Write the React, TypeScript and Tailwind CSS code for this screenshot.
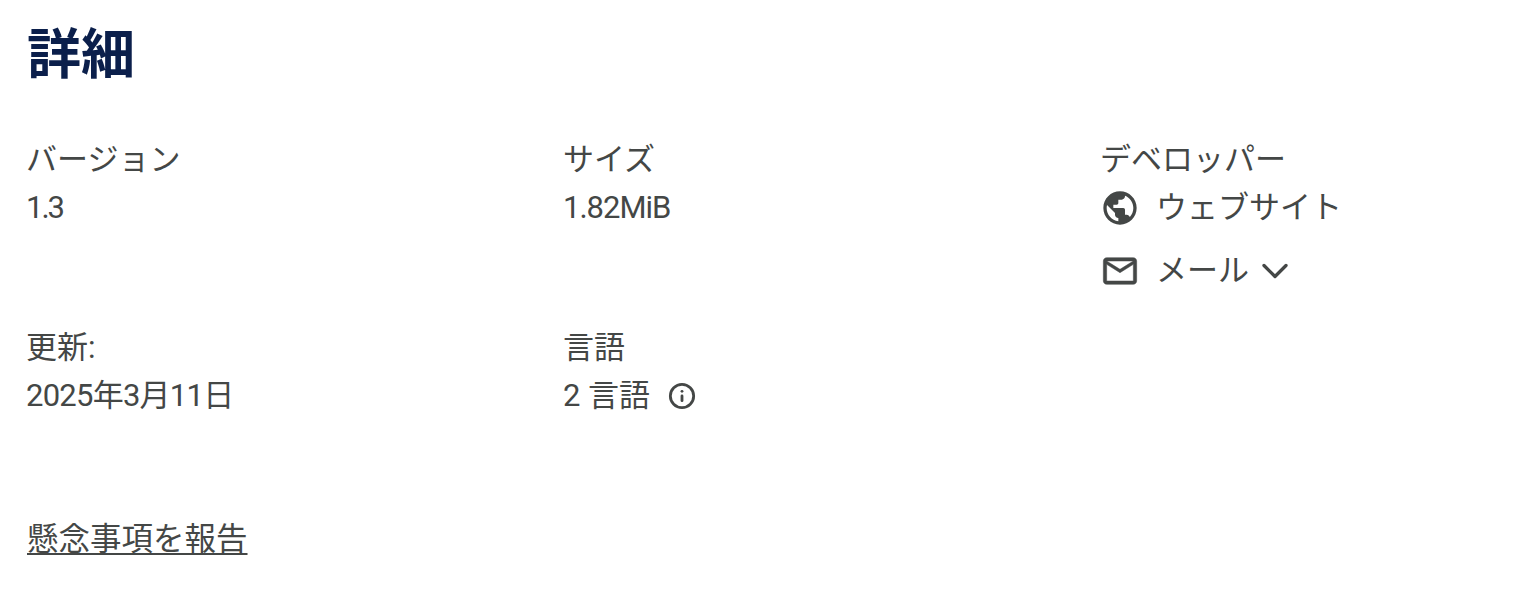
import { ChevronDown, Info } from "lucide-react";

const font = { fontFamily: '"Roboto", "Noto Sans CJK JP", sans-serif' };

function Globe() {
  return (
    <svg viewBox="0 0 24 24" className="h-[40px] w-[40px] shrink-0" fill="#444746">
      <path d="M12 2C6.48 2 2 6.48 2 12s4.48 10 10 10 10-4.48 10-10S17.52 2 12 2zm-1 17.93c-3.95-.49-7-3.85-7-7.93 0-.62.08-1.21.21-1.79L9 15v1c0 1.1.9 2 2 2v1.93zm6.9-2.54c-.26-.81-1-1.39-1.9-1.39h-1v-3c0-.55-.45-1-1-1H8v-2h2c.55 0 1-.45 1-1V7h2c1.1 0 2-.9 2-2v-.41c2.93 1.19 5 4.06 5 7.41 0 2.08-.8 3.97-2.1 5.39z" />
    </svg>
  );
}

function MailIcon() {
  return (
    <svg viewBox="0 0 24 24" className="h-[40px] w-[40px] shrink-0" fill="#444746" stroke="#444746" strokeWidth={0.3}>
      <path d="M20 4H4c-1.1 0-1.99.9-1.99 2L2 18c0 1.1.9 2 2 2h16c1.1 0 2-.9 2-2V6c0-1.1-.9-2-2-2zm0 14H4V8l8 5 8-5v10zm-8-7L4 6h16l-8 5z" />
    </svg>
  );
}

export default function App() {
  return (
    <div style={font} className="h-[605px] w-[1536px] overflow-hidden bg-white pl-[27px] pt-[24px] text-[31px] leading-[48px] text-[#444746]">
      <h2 className="text-[54px] font-bold leading-[64px] text-[#0b1f4b]">詳細</h2>
      <div className="ml-[-1px] mt-[48px] grid grid-cols-[537px_537px_1fr] grid-rows-[188px_auto]">
        <div>
          <div>バージョン</div>
          <div className="tracking-[-2px]">1.3</div>
        </div>
        <div>
          <div>サイズ</div>
          <div className="tracking-[-1px]">1.82MiB</div>
        </div>
        <div>
          <div>デベロッパー</div>
          <div className="flex h-[48px] items-center gap-[16px]">
            <Globe />
            ウェブサイト
          </div>
          <div className="mt-[15px] flex h-[48px] items-center gap-[16px]">
            <MailIcon />
            メール
            <ChevronDown className="ml-[-12px] h-[44px] w-[44px]" strokeWidth={1.8} />
          </div>
        </div>
        <div>
          <div>更新:</div>
          <div className="tracking-[-0.75px]">2025年3月11日</div>
        </div>
        <div>
          <div>言語</div>
          <div className="flex items-center">
            2 言語
            <Info className="ml-[18px] h-[28px] w-[28px]" strokeWidth={2.4} />
          </div>
        </div>
      </div>
      <a href="#" className="mt-[96px] block w-fit text-[31.5px] leading-[48px] underline decoration-2 underline-offset-[3px]">
        懸念事項を報告
      </a>
    </div>
  );
}
